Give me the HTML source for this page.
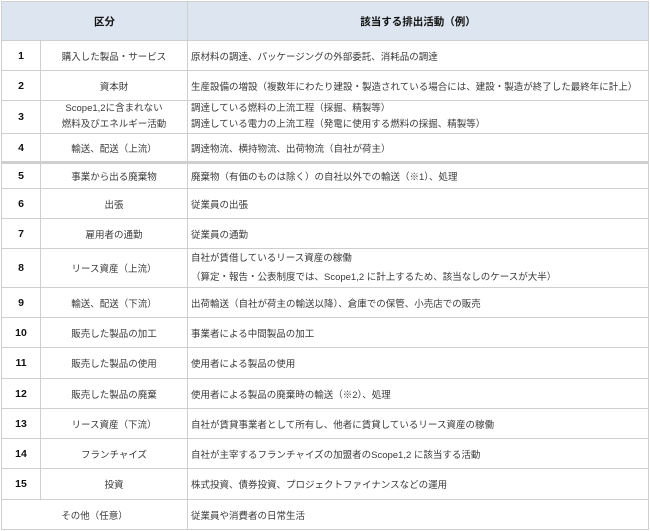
<!DOCTYPE html>
<html><head><meta charset="utf-8"><style>
body{margin:0;background:#fff;}
table{position:absolute;left:1px;top:1px;border-collapse:collapse;table-layout:fixed;width:647px;font-family:"Liberation Sans","Noto Sans CJK JP",sans-serif;font-size:9.5px;color:#3a3a3a;}
td,th{border:1px solid #cfcfcf;padding:0;vertical-align:middle;}
th{background:#dce5f0;font-weight:bold;color:#111;font-size:10.5px;}
td.n{text-align:center;font-weight:bold;color:#111;font-size:10.5px;}
td.c{text-align:center;}
td.d{padding-left:3px;}
tr.thick td{border-top:3px solid #cfcfcf;}
.l2{line-height:16px;}
</style></head><body>
<table>
<colgroup><col style="width:39px"><col style="width:147px"><col style="width:461px"></colgroup>
<tr style="height:39px"><th colspan="2" style="text-align:center;padding-left:20px">区分</th><th>該当する排出活動（例）</th></tr>
<tr style="height:30px"><td class="n">1</td><td class="c">購入した製品・サービス</td><td class="d">原材料の調達、パッケージングの外部委託、消耗品の調達</td></tr>
<tr style="height:30px"><td class="n">2</td><td class="c">資本財</td><td class="d">生産設備の増設（複数年にわたり建設・製造されている場合には、建設・製造が終了した最終年に計上）</td></tr>
<tr style="height:33px"><td class="n">3</td><td class="c l2">Scope1,2に含まれない<br>燃料及びエネルギー活動</td><td class="d l2">調達している燃料の上流工程（採掘、精製等）<br>調達している電力の上流工程（発電に使用する燃料の採掘、精製等）</td></tr>
<tr style="height:29px"><td class="n">4</td><td class="c">輸送、配送（上流）</td><td class="d">調達物流、横持物流、出荷物流（自社が荷主）</td></tr>
<tr class="thick" style="height:26px"><td class="n">5</td><td class="c">事業から出る廃棄物</td><td class="d">廃棄物（有価のものは除く）の自社以外での輸送（※1）、処理</td></tr>
<tr style="height:30px"><td class="n">6</td><td class="c">出張</td><td class="d">従業員の出張</td></tr>
<tr style="height:30px"><td class="n">7</td><td class="c">雇用者の通勤</td><td class="d">従業員の通勤</td></tr>
<tr style="height:38px"><td class="n">8</td><td class="c">リース資産（上流）</td><td class="d" style="line-height:19px">自社が賃借しているリース資産の稼働<br>（算定・報告・公表制度では、Scope1,2 に計上するため、該当なしのケースが大半）</td></tr>
<tr style="height:30px"><td class="n">9</td><td class="c">輸送、配送（下流）</td><td class="d">出荷輸送（自社が荷主の輸送以降）、倉庫での保管、小売店での販売</td></tr>
<tr style="height:30px"><td class="n">10</td><td class="c">販売した製品の加工</td><td class="d">事業者による中間製品の加工</td></tr>
<tr style="height:31px"><td class="n">11</td><td class="c">販売した製品の使用</td><td class="d">使用者による製品の使用</td></tr>
<tr style="height:30px"><td class="n">12</td><td class="c">販売した製品の廃棄</td><td class="d">使用者による製品の廃棄時の輸送（※2）、処理</td></tr>
<tr style="height:30px"><td class="n">13</td><td class="c">リース資産（下流）</td><td class="d">自社が賃貸事業者として所有し、他者に賃貸しているリース資産の稼働</td></tr>
<tr style="height:30px"><td class="n">14</td><td class="c">フランチャイズ</td><td class="d">自社が主宰するフランチャイズの加盟者のScope1,2 に該当する活動</td></tr>
<tr style="height:31px"><td class="n">15</td><td class="c">投資</td><td class="d">株式投資、債券投資、プロジェクトファイナンスなどの運用</td></tr>
<tr style="height:30px"><td colspan="2" class="c">その他（任意）</td><td class="d">従業員や消費者の日常生活</td></tr>
</table>
</body></html>
